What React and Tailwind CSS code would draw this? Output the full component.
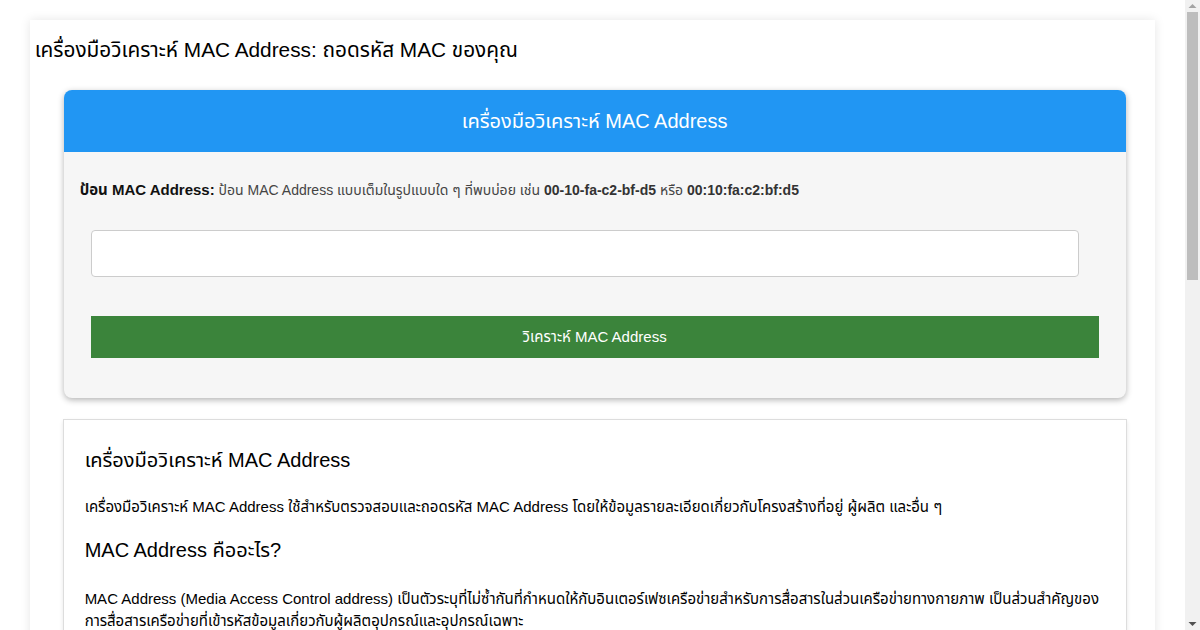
const font = { fontFamily: '"Liberation Sans", "Noto Sans Thai", sans-serif' };

const sections = [
  {
    title: "MAC Address คืออะไร?",
    text: "MAC Address (Media Access Control address) เป็นตัวระบุที่ไม่ซ้ำกันที่กำหนดให้กับอินเตอร์เฟซเครือข่ายสำหรับการสื่อสารในส่วนเครือข่ายทางกายภาพ เป็นส่วนสำคัญของการสื่อสารเครือข่ายที่เข้ารหัสข้อมูลเกี่ยวกับผู้ผลิตอุปกรณ์และอุปกรณ์เฉพาะ",
  },
  {
    title: "วิธีใช้เครื่องมือนี้",
    text: "ป้อน MAC Address ในช่องด้านบน แล้วกดปุ่มวิเคราะห์ เครื่องมือจะแสดงผู้ผลิต รูปแบบที่อยู่ และประเภทของที่อยู่ให้คุณทันที",
  },
];

function Scrollbar() {
  return (
    <div className="flex h-[630px] w-[15px] shrink-0 flex-col items-center bg-[#f1f1f1]">
      <svg width="15" height="12" viewBox="0 0 15 12" className="shrink-0">
        <path d="M3.5 8 L7.5 4 L11.5 8 Z" fill="#a3a3a3" />
      </svg>
      <div className="h-[268px] w-[11px] bg-[#bdbdbd]" />
      <div className="flex-1" />
      <svg width="15" height="12" viewBox="0 0 15 12" className="shrink-0">
        <path d="M3.5 4 L7.5 8 L11.5 4 Z" fill="#505050" />
      </svg>
    </div>
  );
}

export default function App() {
  return (
    <div className="flex h-[630px] overflow-hidden bg-white" style={font}>
      <div className="min-w-0 flex-1 pt-5">
        <div className="mx-auto w-[95%] bg-white pb-8 shadow-[0_0_10px_rgba(0,0,0,0.1)]">
          <h1 className="px-[5px] pt-[16px] text-[20.8px] font-normal leading-[28px] text-black">
            เครื่องมือวิเคราะห์ MAC Address: ถอดรหัส MAC ของคุณ
          </h1>

          <div className="mt-[26px] ml-[34px] w-[1062px] overflow-hidden rounded-lg bg-[#f6f6f6] shadow-[0_2px_6px_rgba(0,0,0,0.3)]">
            <div className="flex h-[62px] items-center justify-center bg-[#2196f3] text-[20px] text-white">
              เครื่องมือวิเคราะห์ MAC Address
            </div>
            <div className="pt-[27px] pb-[40px]">
              <p className="px-4 text-[14px] leading-[22px] text-[#444]">
                <b className="text-[15px] text-[#111]">ป้อน MAC Address:</b> ป้อน MAC Address แบบเต็มในรูปแบบใด ๆ ที่พบบ่อย เช่น{" "}
                <b className="text-[#333]">00-10-fa-c2-bf-d5</b> หรือ{" "}
                <b className="text-[#333]">00:10:fa:c2:bf:d5</b>
              </p>
              <div className="px-[27px]">
                <input
                  type="text"
                  className="mt-[29px] block h-[47px] w-[988px] rounded border border-[#ccc] bg-white px-3 text-[15px] outline-none"
                />
                <button className="mt-[39px] flex h-[42px] w-full items-center justify-center bg-[#3b843b] text-[15px] text-white">
                  วิเคราะห์ MAC Address
                </button>
              </div>
            </div>
          </div>

          <div className="mt-[21px] ml-[33px] w-[1064px] border border-[#ddd] bg-white px-[21px] pt-[26px] pb-6 shadow-[0_2px_4px_rgba(0,0,0,0.1)]">
            <h2 className="text-[20px] leading-[28px] text-black">เครื่องมือวิเคราะห์ MAC Address</h2>
            <p className="mt-[22px] text-[15px] leading-[22px] text-black">
              เครื่องมือวิเคราะห์ MAC Address ใช้สำหรับตรวจสอบและถอดรหัส MAC Address โดยให้ข้อมูลรายละเอียดเกี่ยวกับโครงสร้างที่อยู่ ผู้ผลิต และอื่น ๆ
            </p>
            {sections.map((s) => (
              <div key={s.title}>
                <h2 className="mt-[18px] text-[20px] leading-[28px] text-black">{s.title}</h2>
                <p className="mt-[24px] text-[15px] leading-[22px] text-black">{s.text}</p>
              </div>
            ))}
          </div>
        </div>
      </div>
      <Scrollbar />
    </div>
  );
}
